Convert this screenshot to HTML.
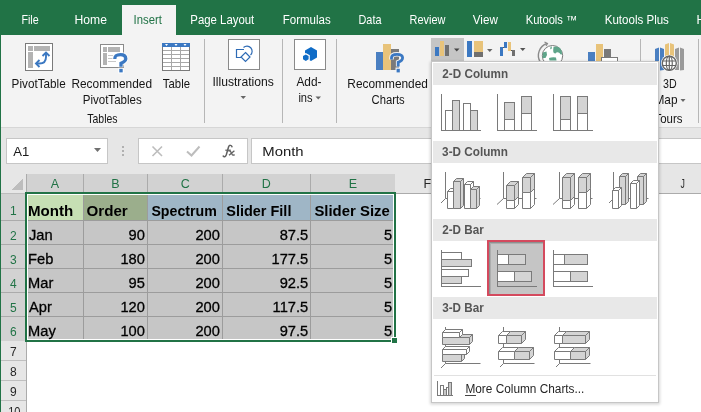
<!DOCTYPE html>
<html><head><meta charset="utf-8"><style>
html,body{margin:0;padding:0;width:701px;height:412px;overflow:hidden;background:#fff}
svg{display:block;will-change:transform;font-family:"Liberation Sans",sans-serif}
</style></head><body>
<svg width="701" height="412" viewBox="0 0 701 412">
<g shape-rendering="crispEdges">
<rect x="0" y="0" width="701" height="35" fill="#217346"/>
<rect x="122" y="5" width="54" height="30" fill="#f3f3f3"/>
<rect x="0" y="35" width="701" height="92" fill="#f3f3f3"/>
<rect x="0" y="127" width="701" height="1" fill="#d6d6d6"/>
<rect x="0" y="128" width="701" height="46" fill="#e6e6e6"/>
<!-- separators -->
<rect x="204" y="39" width="1" height="84" fill="#b6b6b6"/>
<rect x="282" y="39" width="1" height="84" fill="#b6b6b6"/>
<rect x="336" y="39" width="1" height="84" fill="#b6b6b6"/>
<rect x="640" y="39" width="1" height="84" fill="#b6b6b6"/>
<rect x="698" y="39" width="1" height="84" fill="#b6b6b6"/>
<!-- name box -->
<rect x="6.5" y="138.5" width="101" height="25" fill="#fff" stroke="#c6c6c6"/>
<rect x="122" y="146" width="2" height="2" fill="#b0b0b0"/>
<rect x="122" y="150" width="2" height="2" fill="#b0b0b0"/>
<rect x="122" y="154" width="2" height="2" fill="#b0b0b0"/>
<rect x="138.5" y="138.5" width="109" height="25" fill="#fff" stroke="#c6c6c6"/>
<rect x="251.5" y="138.5" width="460" height="25" fill="#fff" stroke="#c6c6c6"/>
</g>
<path d="M94 148 L101 148 L97.5 152 Z" fill="#707070"/>
<path d="M152.5 146.5 L162 156 M162 146.5 L152.5 156" stroke="#bdbdbd" stroke-width="1.6" fill="none"/>
<path d="M187 151.5 L191.5 155.5 L199.5 146.5" stroke="#bdbdbd" stroke-width="2" fill="none"/>
<path d="M232 146.8 C 231.5 145 229.3 144.8 228.6 146.8 L 226.3 154.8 C 225.6 157 224 157.2 223.2 156" stroke="#606060" stroke-width="1.5" fill="none" stroke-linecap="round"/>
<path d="M225.3 150.2 L230.8 150.2" stroke="#606060" stroke-width="1.2"/>
<path d="M228.4 151.2 C 229.8 150.6 230.6 151 231.2 152.6 L 232 154.2 C 232.6 155.4 233.6 155.3 234.6 154.6" stroke="#606060" stroke-width="1.3" fill="none"/>
<path d="M234.4 150.8 L 229 155.3" stroke="#606060" stroke-width="1.3" fill="none"/>

<!-- grid -->
<g shape-rendering="crispEdges">
<rect x="0" y="174" width="701" height="238" fill="#ffffff"/>
<!-- corner -->
<rect x="0" y="174" width="26" height="19" fill="#e6e6e6"/>
<!-- col headers selected -->
<rect x="26" y="174" width="369" height="18" fill="#d2d2d2"/>
<rect x="395" y="174" width="306" height="19" fill="#e6e6e6"/>
<rect x="395" y="193" width="306" height="1" fill="#ababab"/>
<rect x="83" y="174" width="1" height="18" fill="#ababab"/>
<rect x="147" y="174" width="1" height="18" fill="#ababab"/>
<rect x="222" y="174" width="1" height="18" fill="#ababab"/>
<rect x="310" y="174" width="1" height="18" fill="#ababab"/>
<rect x="26" y="174" width="1" height="18" fill="#ababab"/>
<!-- row headers -->
<rect x="0" y="193" width="26" height="148" fill="#d2d2d2"/>
<rect x="0" y="341" width="26" height="71" fill="#e6e6e6"/>
<rect x="26" y="341" width="1" height="71" fill="#ababab"/>
<rect x="0" y="220" width="26" height="1" fill="#ababab"/>
<rect x="0" y="244" width="26" height="1" fill="#ababab"/>
<rect x="0" y="268" width="26" height="1" fill="#ababab"/>
<rect x="0" y="292" width="26" height="1" fill="#ababab"/>
<rect x="0" y="316" width="26" height="1" fill="#ababab"/>
<rect x="0" y="360" width="26" height="1" fill="#bfbfbf"/>
<rect x="0" y="380" width="26" height="1" fill="#bfbfbf"/>
<rect x="0" y="400" width="26" height="1" fill="#bfbfbf"/>
<!-- cells -->
<rect x="27" y="194" width="367" height="146" fill="#ffffff"/>
<rect x="28" y="195" width="365" height="144" fill="#c6c6c6"/>
<rect x="28" y="195" width="55" height="25" fill="#c6dfb4"/>
<rect x="84" y="195" width="63" height="25" fill="#9bae8c"/>
<rect x="148" y="195" width="245" height="25" fill="#9fb6c6"/>
<rect x="83" y="195" width="1" height="144" fill="#9c9c9c"/>
<rect x="147" y="195" width="1" height="144" fill="#9c9c9c"/>
<rect x="222" y="195" width="1" height="144" fill="#9c9c9c"/>
<rect x="310" y="195" width="1" height="144" fill="#9c9c9c"/>
<rect x="28" y="220" width="365" height="1" fill="#9c9c9c"/>
<rect x="28" y="244" width="365" height="1" fill="#9c9c9c"/>
<rect x="28" y="268" width="365" height="1" fill="#9c9c9c"/>
<rect x="28" y="292" width="365" height="1" fill="#9c9c9c"/>
<rect x="28" y="316" width="365" height="1" fill="#9c9c9c"/>
<!-- selection border -->
<rect x="25" y="192" width="371" height="2" fill="#217346"/>
<rect x="25" y="340" width="366" height="2" fill="#217346"/>
<rect x="25" y="192" width="2" height="150" fill="#217346"/>
<rect x="394" y="192" width="2" height="145" fill="#217346"/>
<rect x="391" y="337" width="7" height="7" fill="#ffffff"/>
<rect x="392" y="338" width="5" height="5" fill="#217346"/>
<!-- corner triangle -->
<path d="M11.5 189.7 L23 178.4 L23 189.7 Z" fill="#bdbdbd"/>
<rect x="1" y="193" width="24" height="1" fill="#bdbdbd"/>
<!-- left green edge -->
<rect x="0" y="35" width="1" height="377" fill="#217346"/>
</g>

<!-- ribbon icons -->
<!-- PivotTable -->
<g shape-rendering="crispEdges">
<rect x="25.5" y="43.5" width="27" height="27" fill="#fff" stroke="#7a7a7a"/>
<rect x="28" y="46" width="5" height="5" fill="#b3b3b3"/>
<rect x="34" y="46" width="16" height="5" fill="#b3b3b3"/>
<rect x="28" y="52" width="5" height="16" fill="#b3b3b3"/>
</g>
<path d="M36.5 63.5 L39.5 63.5 C 43.5 63.5 46 61 46 57 L46 53" stroke="#3b78c2" stroke-width="1.9" fill="none"/>
<path d="M39.5 60 L36 63.5 L39.5 67" stroke="#3b78c2" stroke-width="1.9" fill="none"/>
<path d="M42.5 56 L46 52.5 L49.5 56" stroke="#3b78c2" stroke-width="1.9" fill="none"/>
<!-- Recommended PivotTables -->
<g shape-rendering="crispEdges">
<rect x="100.5" y="44.5" width="23" height="23" fill="#fff" stroke="#8a8a8a"/>
<rect x="103" y="47" width="4" height="5" fill="#b3b3b3"/>
<rect x="108" y="47" width="12" height="5" fill="#b3b3b3"/>
<rect x="103" y="53" width="4" height="12" fill="#b3b3b3"/>
<rect x="108" y="55" width="6" height="1" fill="#c8c8c8"/>
<rect x="108" y="58" width="6" height="1" fill="#c8c8c8"/>
<rect x="108" y="61" width="8" height="1" fill="#c8c8c8"/>
</g>
<path d="M114.8 59 C 114.8 55.3 116.8 54.6 120.5 54.6 C 124 54.6 125.8 56.5 125.8 58.8 C 125.8 61.3 123.5 62.3 121 63.3 L 121 66.8" stroke="#ffffff" stroke-width="5" fill="none"/>
<rect x="118.3" y="67.8" width="5.4" height="5.6" fill="#fff"/>
<path d="M114.8 59 C 114.8 55.3 116.8 54.6 120.5 54.6 C 124 54.6 125.8 56.5 125.8 58.8 C 125.8 61.3 123.5 62.3 121 63.3 L 121 66.8" stroke="#3b78c2" stroke-width="3.3" fill="none"/>
<rect x="119.3" y="68.8" width="3.4" height="3.6" fill="#3b78c2"/>
<!-- Table -->
<g shape-rendering="crispEdges">
<rect x="162" y="43" width="28" height="28" fill="#7a7a7a"/>
<rect x="163" y="47" width="26" height="23" fill="#a8a8a8"/>
<rect x="162" y="43" width="28" height="4" fill="#3b78c2"/>
</g>
<g fill="#fff" shape-rendering="crispEdges">
<rect x="163" y="47" width="8" height="3"/><rect x="172" y="47" width="8" height="3"/><rect x="181" y="47" width="8" height="3"/>
<rect x="163" y="51" width="8" height="3"/><rect x="172" y="51" width="8" height="3"/><rect x="181" y="51" width="8" height="3"/>
<rect x="163" y="55" width="8" height="3"/><rect x="172" y="55" width="8" height="3"/><rect x="181" y="55" width="8" height="3"/>
<rect x="163" y="59" width="8" height="3"/><rect x="172" y="59" width="8" height="3"/><rect x="181" y="59" width="8" height="3"/>
<rect x="163" y="63" width="8" height="3"/><rect x="172" y="63" width="8" height="3"/><rect x="181" y="63" width="8" height="3"/>
<rect x="163" y="67" width="8" height="3"/><rect x="172" y="67" width="8" height="3"/><rect x="181" y="67" width="8" height="3"/>
</g>
<path d="M165 44 L168 44 L166.5 46 Z M174.5 44 L177.5 44 L176 46 Z M183.5 44 L186.5 44 L185 46 Z" fill="#fff"/>
<!-- Illustrations -->
<rect x="228.5" y="39.5" width="31" height="30" fill="#fff" stroke="#8a8a8a" shape-rendering="crispEdges"/>
<path d="M244 49.5 L236.5 49.5 L236.5 57.5 L241 57.5" stroke="#2e6bb5" stroke-width="1.2" fill="none"/>
<path d="M245.5 52.5 L250 57 L245.5 61.5 L241 57 Z" stroke="#2e6bb5" stroke-width="1.2" fill="none"/>
<path d="M243.5 47.5 A 5 5 0 1 1 250.5 55" stroke="#2e6bb5" stroke-width="1.2" fill="none"/>
<!-- Add-ins -->
<rect x="294.5" y="39.5" width="31" height="30" fill="#fff" stroke="#8a8a8a" shape-rendering="crispEdges"/>
<path d="M311 47 L317 50.5 L317 57.5 L311 61 L305 57.5 L305 50.5 Z" fill="#0f6cc7"/>
<path d="M305.8 53 L309.8 55.3 L309.8 59.9 L305.8 62.2 L301.8 59.9 L301.8 55.3 Z" fill="#fff"/>
<path d="M305.8 54.5 L308.6 56.1 L308.6 59.3 L305.8 60.9 L303 59.3 L303 56.1 Z" fill="#0f6cc7"/>
<!-- Recommended Charts -->
<g shape-rendering="crispEdges">
<rect x="376" y="52" width="7" height="18" fill="#4a7fc1"/>
<rect x="383" y="44" width="8" height="26" fill="#e8c37a"/>
<rect x="391" y="49" width="8" height="21" fill="#7a7a7a"/>
</g>
<path d="M391.5 59.5 L391.5 57.8 Q 391.5 54.3 397 54.3 Q 402.6 54.3 402.6 57.8 Q 402.6 60.8 398.2 62.3 L 398.2 66.5" stroke="#f3f3f3" stroke-width="4.6" fill="none"/>
<rect x="395.5" y="67.5" width="5" height="6" fill="#f3f3f3"/>
<path d="M391.5 59.5 L391.5 57.8 Q 391.5 54.3 397 54.3 Q 402.6 54.3 402.6 57.8 Q 402.6 60.8 398.2 62.3 L 398.2 66.5" stroke="#3b78c2" stroke-width="2.8" fill="none"/>
<rect x="396.6" y="68.8" width="3.2" height="3.6" fill="#3b78c2"/>
<!-- column chart button highlight -->
<rect x="431" y="38" width="33" height="23" fill="#c5c5c5" shape-rendering="crispEdges"/>
<g shape-rendering="crispEdges">
<rect x="435" y="47" width="4" height="9" fill="#3b78c2"/>
<rect x="440" y="41" width="4" height="15" fill="#e8c37a"/>
<rect x="445" y="45" width="4" height="11" fill="#707070"/>
<rect x="467" y="41" width="5" height="16" fill="#3b78c2"/>
<rect x="474" y="41" width="9" height="11" fill="#e8c37a"/>
<rect x="474" y="52" width="9" height="5" fill="#707070"/>
<rect x="500" y="47" width="3" height="9" fill="#3b78c2"/>
<rect x="504" y="42" width="3" height="6" fill="#3b78c2"/>
<rect x="503" y="47" width="1" height="1" fill="#555"/>
<rect x="508" y="42" width="3" height="9" fill="#e8c37a"/>
<rect x="512" y="50" width="3" height="6" fill="#707070"/>
<rect x="511" y="50" width="1" height="1" fill="#555"/>
</g>
<path d="M454 48.5 L459.5 48.5 L456.75 51.5 Z" fill="#444"/>
<path d="M487 49 L492.5 49 L489.75 52 Z" fill="#666"/>
<path d="M520 48 L525.5 48 L522.75 51 Z" fill="#555"/>
<!-- globe -->
<path d="M547 43.5 A 12.5 12.5 0 0 0 540.3 62" stroke="#8a8a8a" stroke-width="1.4" fill="none"/>
<path d="M544.5 42 L547.5 43.5 L546 46" stroke="#8a8a8a" stroke-width="1.2" fill="none"/>
<circle cx="552.5" cy="55.7" r="10.2" fill="#fff" stroke="#7a7a7a" stroke-width="1"/>
<path d="M553.5 47 Q 557 45.5 560 48 Q 562.5 51 562 54 Q 561 55.5 559.5 53 Q 557 51.5 555.5 53.5 Q 553 53.5 553.2 50 Z" fill="#5fa58a"/>
<path d="M542.8 52.5 L546.5 51.5 L547 55 L545.5 58 L542.5 58 Z" fill="#5fa58a"/>
<path d="M549 58 Q 552 57 556 57.5 L556.5 60.5 L549.5 60.5 Z" fill="#5fa58a"/>
<path d="M550.5 47 L552 46.5 L551.5 49 L550.2 49.2 Z" fill="#5fa58a"/>
<!-- pivot chart -->
<g shape-rendering="crispEdges">
<rect x="588" y="52" width="7" height="12" fill="#4a7fc1"/>
<rect x="596" y="44" width="7" height="20" fill="#e8c37a"/>
<rect x="604" y="49" width="7" height="8" fill="#7a7a7a"/>
<rect x="601.5" y="57.5" width="16" height="8" fill="#fff" stroke="#7a7a7a"/>
</g>
<!-- 3D map -->
<path d="M655 49 L659 47.5 L659 70 L655 70 Z" fill="#4a7fc1"/>
<path d="M660 47.5 L664 49 L664 70 L660 70.5 Z" fill="#4a7fc1"/>
<path d="M665 44.5 L669 43 L669 62 L665 62 Z" fill="#e8c37a"/>
<path d="M670 43 L674 44.5 L674 62 L670 62 Z" fill="#e8c37a"/>
<path d="M675 49 L679 47.5 L679 70 L675 70 Z" fill="#9a9a9a"/>
<path d="M680 47.5 L684 49 L684 70 L680 70.5 Z" fill="#9a9a9a"/>
<circle cx="669.3" cy="63.2" r="8.3" fill="#fff"/>
<circle cx="669.3" cy="63.2" r="7" fill="none" stroke="#666" stroke-width="1.4"/>
<path d="M662.5 61 L676 61 M662.5 65.5 L676 65.5 M669.3 56.2 L669.3 70.2" stroke="#666" stroke-width="1.2"/>
<ellipse cx="669.3" cy="63.2" rx="3" ry="7" fill="none" stroke="#666" stroke-width="1.2"/>
<path d="M680.5 99 L685.5 99 L683 102 Z" fill="#666"/>
<!-- ribbon dropdown arrows -->
<path d="M240.5 96 L246 96 L243.25 99 Z" fill="#666"/>
<path d="M315.5 96.5 L321 96.5 L318.25 99.5 Z" fill="#666"/>

<g>
<text transform="translate(21.40,23.70) scale(0.8951,1)" font-size="12" font-weight="normal" fill="#ffffff">File</text>
<text transform="translate(74.50,23.70) scale(1.0144,1)" font-size="12" font-weight="normal" fill="#ffffff">Home</text>
<text transform="translate(133.56,23.70) scale(0.9435,1)" font-size="12" font-weight="normal" fill="#217346">Insert</text>
<text transform="translate(190.30,23.70) scale(0.9507,1)" font-size="12" font-weight="normal" fill="#ffffff">Page Layout</text>
<text transform="translate(282.70,23.70) scale(0.9598,1)" font-size="12" font-weight="normal" fill="#ffffff">Formulas</text>
<text transform="translate(358.50,23.70) scale(0.9075,1)" font-size="12" font-weight="normal" fill="#ffffff">Data</text>
<text transform="translate(409.60,23.70) scale(0.9123,1)" font-size="12" font-weight="normal" fill="#ffffff">Review</text>
<text transform="translate(472.80,23.70) scale(0.9722,1)" font-size="12" font-weight="normal" fill="#ffffff">View</text>
<text transform="translate(525.70,23.70) scale(0.9308,1)" font-size="12" font-weight="normal" fill="#ffffff">Kutools ™</text>
<text transform="translate(604.70,23.70) scale(0.9640,1)" font-size="12" font-weight="normal" fill="#ffffff">Kutools Plus</text>
<text transform="translate(696.40,23.70) scale(1.0000,1)" font-size="12" font-weight="normal" fill="#ffffff">H</text>
<text transform="translate(11.60,88.00) scale(0.9768,1)" font-size="12" font-weight="normal" fill="#151515">PivotTable</text>
<text transform="translate(71.40,88.00) scale(0.9926,1)" font-size="12" font-weight="normal" fill="#151515">Recommended</text>
<text transform="translate(82.70,103.80) scale(0.9631,1)" font-size="12" font-weight="normal" fill="#151515">PivotTables</text>
<text transform="translate(87.30,122.60) scale(0.8735,1)" font-size="12" font-weight="normal" fill="#151515">Tables</text>
<text transform="translate(162.80,88.00) scale(0.9478,1)" font-size="12" font-weight="normal" fill="#151515">Table</text>
<text transform="translate(212.39,86.10) scale(1.0119,1)" font-size="12" font-weight="normal" fill="#151515">Illustrations</text>
<text transform="translate(296.40,86.10) scale(0.9901,1)" font-size="12" font-weight="normal" fill="#151515">Add-</text>
<text transform="translate(298.40,101.50) scale(0.9257,1)" font-size="12" font-weight="normal" fill="#151515">ins</text>
<text transform="translate(347.30,87.80) scale(0.9926,1)" font-size="12" font-weight="normal" fill="#151515">Recommended</text>
<text transform="translate(371.50,103.70) scale(0.9393,1)" font-size="12" font-weight="normal" fill="#151515">Charts</text>
<text transform="translate(663.00,88.00) scale(0.8868,1)" font-size="12" font-weight="normal" fill="#151515">3D</text>
<text transform="translate(654.50,104.00) scale(0.9886,1)" font-size="12" font-weight="normal" fill="#151515">Map</text>
<text transform="translate(654.50,122.80) scale(0.9542,1)" font-size="12" font-weight="normal" fill="#151515">Tours</text>
<text transform="translate(13.20,156.00) scale(1.0082,1)" font-size="13" font-weight="normal" fill="#1a1a1a">A1</text>
<text transform="translate(262.25,156.00) scale(1.1461,1)" font-size="13" font-weight="normal" fill="#1a1a1a">Month</text>
<text transform="translate(50.80,188.00) scale(1.0000,1)" font-size="12.5" font-weight="normal" fill="#217346">A</text>
<text transform="translate(111.30,188.00) scale(1.0000,1)" font-size="12.5" font-weight="normal" fill="#217346">B</text>
<text transform="translate(180.80,188.00) scale(1.0000,1)" font-size="12.5" font-weight="normal" fill="#217346">C</text>
<text transform="translate(261.80,188.00) scale(1.0000,1)" font-size="12.5" font-weight="normal" fill="#217346">D</text>
<text transform="translate(348.80,188.00) scale(1.0000,1)" font-size="12.5" font-weight="normal" fill="#217346">E</text>
<text transform="translate(423.50,188.00) scale(1.0000,1)" font-size="12.5" font-weight="normal" fill="#262626">F</text>
<text transform="translate(680.50,187.80) scale(0.7000,1)" font-size="12.5" font-weight="normal" fill="#262626">J</text>
<text transform="translate(10.00,215.00) scale(1.0000,1)" font-size="12" font-weight="normal" fill="#217346">1</text>
<text transform="translate(10.00,240.00) scale(1.0000,1)" font-size="12" font-weight="normal" fill="#217346">2</text>
<text transform="translate(10.00,264.00) scale(1.0000,1)" font-size="12" font-weight="normal" fill="#217346">3</text>
<text transform="translate(10.00,288.00) scale(1.0000,1)" font-size="12" font-weight="normal" fill="#217346">4</text>
<text transform="translate(10.00,312.00) scale(1.0000,1)" font-size="12" font-weight="normal" fill="#217346">5</text>
<text transform="translate(10.00,336.00) scale(1.0000,1)" font-size="12" font-weight="normal" fill="#217346">6</text>
<text transform="translate(10.00,356.00) scale(1.0000,1)" font-size="12" font-weight="normal" fill="#262626">7</text>
<text transform="translate(10.00,376.00) scale(1.0000,1)" font-size="12" font-weight="normal" fill="#262626">8</text>
<text transform="translate(10.00,396.00) scale(1.0000,1)" font-size="12" font-weight="normal" fill="#262626">9</text>
<text transform="translate(8.20,416.00) scale(0.9215,1)" font-size="12" font-weight="normal" fill="#262626">10</text>
<text transform="translate(28.01,215.80) scale(0.9941,1)" font-size="15.2" font-weight="bold" fill="#000000">Month</text>
<text transform="translate(86.50,215.80) scale(0.9964,1)" font-size="15.2" font-weight="bold" fill="#000000">Order</text>
<text transform="translate(151.40,215.80) scale(0.9332,1)" font-size="15.2" font-weight="bold" fill="#000000">Spectrum</text>
<text transform="translate(226.30,215.80) scale(0.9525,1)" font-size="15.2" font-weight="bold" fill="#000000">Slider Fill</text>
<text transform="translate(314.40,215.80) scale(0.9808,1)" font-size="15.2" font-weight="bold" fill="#000000">Slider Size</text>
<text transform="translate(29.00,239.90) scale(0.9710,1)" font-size="15.1" font-weight="normal" fill="#000000" stroke="#000000" stroke-width="0.3">Jan</text>
<text transform="translate(128.58,239.90) scale(0.9710,1)" font-size="15.1" font-weight="normal" fill="#000000" stroke="#000000" stroke-width="0.3">90</text>
<text transform="translate(195.43,239.90) scale(0.9710,1)" font-size="15.1" font-weight="normal" fill="#000000" stroke="#000000" stroke-width="0.3">200</text>
<text transform="translate(279.66,239.90) scale(0.9710,1)" font-size="15.1" font-weight="normal" fill="#000000" stroke="#000000" stroke-width="0.3">87.5</text>
<text transform="translate(383.93,239.90) scale(0.9710,1)" font-size="15.1" font-weight="normal" fill="#000000" stroke="#000000" stroke-width="0.3">5</text>
<text transform="translate(28.03,263.90) scale(0.9710,1)" font-size="15.1" font-weight="normal" fill="#000000" stroke="#000000" stroke-width="0.3">Feb</text>
<text transform="translate(120.43,263.90) scale(0.9710,1)" font-size="15.1" font-weight="normal" fill="#000000" stroke="#000000" stroke-width="0.3">180</text>
<text transform="translate(195.43,263.90) scale(0.9710,1)" font-size="15.1" font-weight="normal" fill="#000000" stroke="#000000" stroke-width="0.3">200</text>
<text transform="translate(271.51,263.90) scale(0.9710,1)" font-size="15.1" font-weight="normal" fill="#000000" stroke="#000000" stroke-width="0.3">177.5</text>
<text transform="translate(383.93,263.90) scale(0.9710,1)" font-size="15.1" font-weight="normal" fill="#000000" stroke="#000000" stroke-width="0.3">5</text>
<text transform="translate(28.03,287.90) scale(0.9710,1)" font-size="15.1" font-weight="normal" fill="#000000" stroke="#000000" stroke-width="0.3">Mar</text>
<text transform="translate(128.58,287.90) scale(0.9710,1)" font-size="15.1" font-weight="normal" fill="#000000" stroke="#000000" stroke-width="0.3">95</text>
<text transform="translate(195.43,287.90) scale(0.9710,1)" font-size="15.1" font-weight="normal" fill="#000000" stroke="#000000" stroke-width="0.3">200</text>
<text transform="translate(279.66,287.90) scale(0.9710,1)" font-size="15.1" font-weight="normal" fill="#000000" stroke="#000000" stroke-width="0.3">92.5</text>
<text transform="translate(383.93,287.90) scale(0.9710,1)" font-size="15.1" font-weight="normal" fill="#000000" stroke="#000000" stroke-width="0.3">5</text>
<text transform="translate(29.00,311.90) scale(0.9710,1)" font-size="15.1" font-weight="normal" fill="#000000" stroke="#000000" stroke-width="0.3">Apr</text>
<text transform="translate(120.43,311.90) scale(0.9710,1)" font-size="15.1" font-weight="normal" fill="#000000" stroke="#000000" stroke-width="0.3">120</text>
<text transform="translate(195.43,311.90) scale(0.9710,1)" font-size="15.1" font-weight="normal" fill="#000000" stroke="#000000" stroke-width="0.3">200</text>
<text transform="translate(272.60,311.90) scale(0.9710,1)" font-size="15.1" font-weight="normal" fill="#000000" stroke="#000000" stroke-width="0.3">117.5</text>
<text transform="translate(383.93,311.90) scale(0.9710,1)" font-size="15.1" font-weight="normal" fill="#000000" stroke="#000000" stroke-width="0.3">5</text>
<text transform="translate(28.03,335.90) scale(0.9710,1)" font-size="15.1" font-weight="normal" fill="#000000" stroke="#000000" stroke-width="0.3">May</text>
<text transform="translate(120.43,335.90) scale(0.9710,1)" font-size="15.1" font-weight="normal" fill="#000000" stroke="#000000" stroke-width="0.3">100</text>
<text transform="translate(195.43,335.90) scale(0.9710,1)" font-size="15.1" font-weight="normal" fill="#000000" stroke="#000000" stroke-width="0.3">200</text>
<text transform="translate(279.66,335.90) scale(0.9710,1)" font-size="15.1" font-weight="normal" fill="#000000" stroke="#000000" stroke-width="0.3">97.5</text>
<text transform="translate(383.93,335.90) scale(0.9710,1)" font-size="15.1" font-weight="normal" fill="#000000" stroke="#000000" stroke-width="0.3">5</text>
</g>
<!-- panel shadow -->
<defs><filter id="sh" x="-10%" y="-10%" width="120%" height="120%"><feGaussianBlur stdDeviation="1.6"/></filter></defs>
<rect x="430" y="61.5" width="230" height="343" fill="#000" opacity="0.16" filter="url(#sh)"/>
<g shape-rendering="crispEdges">
<rect x="431" y="61" width="228" height="342" fill="#c6c6c6"/>
<rect x="432" y="62" width="226" height="340" fill="#ffffff"/>
<rect x="433" y="63" width="224" height="22" fill="#e8e8e8"/>
<rect x="433" y="141" width="224" height="22" fill="#e8e8e8"/>
<rect x="433" y="219" width="224" height="22" fill="#e8e8e8"/>
<rect x="433" y="297" width="224" height="22" fill="#e8e8e8"/>
<rect x="434" y="375" width="222" height="1" fill="#e1e1e1"/>
<rect x="487" y="240" width="58" height="56" fill="#d44a5e"/>
<rect x="489" y="242" width="54" height="52" fill="#c5c5c5"/>
<rect x="489" y="242" width="54" height="1" fill="#8d9190"/>
<rect x="489" y="242" width="1" height="52" fill="#8d9190"/>
<rect x="490" y="243" width="53" height="1" fill="#acadad"/>
<rect x="490" y="243" width="1" height="51" fill="#acadad"/>
</g>
<g stroke="#7a7a7a" stroke-width="1" fill="none" shape-rendering="crispEdges">
<path d="M441.5 94 L441.5 130.5 L481 130.5"/>
<rect x="445.5" y="110.5" width="7" height="20" fill="#ffffff"/>
<rect x="452.5" y="100.5" width="7" height="30" fill="#d4d4d4"/>
<rect x="463.5" y="103.5" width="7" height="27" fill="#ffffff"/>
<rect x="470.5" y="110.5" width="7" height="20" fill="#d4d4d4"/>
<path d="M497.5 94 L497.5 130.5 L537 130.5"/>
<rect x="504.5" y="102.5" width="10" height="17" fill="#d4d4d4"/>
<rect x="504.5" y="119.5" width="10" height="11" fill="#ffffff"/>
<rect x="521.5" y="96.5" width="10" height="17" fill="#d4d4d4"/>
<rect x="521.5" y="113.5" width="10" height="17" fill="#ffffff"/>
<path d="M553.5 94 L553.5 130.5 L593 130.5"/>
<rect x="560.5" y="96.5" width="10" height="23" fill="#d4d4d4"/>
<rect x="560.5" y="119.5" width="10" height="11" fill="#ffffff"/>
<rect x="577.5" y="96.5" width="10" height="17" fill="#d4d4d4"/>
<rect x="577.5" y="113.5" width="10" height="17" fill="#ffffff"/>
<path d="M441.5 250 L441.5 286.5 L481 286.5"/>
<rect x="441.5" y="252.5" width="20" height="7" fill="#ffffff"/>
<rect x="441.5" y="259.5" width="30" height="7" fill="#d4d4d4"/>
<rect x="441.5" y="269.5" width="27" height="7" fill="#ffffff"/>
<rect x="441.5" y="276.5" width="20" height="7" fill="#d4d4d4"/>
<path d="M497.5 250 L497.5 286.5 L537 286.5"/>
<rect x="497.5" y="254.5" width="11" height="10" fill="#ffffff"/>
<rect x="508.5" y="254.5" width="17" height="10" fill="#d4d4d4"/>
<rect x="497.5" y="271.5" width="17" height="10" fill="#ffffff"/>
<rect x="514.5" y="271.5" width="17" height="10" fill="#d4d4d4"/>
<path d="M553.5 250 L553.5 286.5 L593 286.5"/>
<rect x="553.5" y="254.5" width="11" height="10" fill="#ffffff"/>
<rect x="564.5" y="254.5" width="23" height="10" fill="#d4d4d4"/>
<rect x="553.5" y="271.5" width="17" height="10" fill="#ffffff"/>
<rect x="570.5" y="271.5" width="17" height="10" fill="#d4d4d4"/>
</g>
<g shape-rendering="geometricPrecision">
<path d="M445.5 172 L445.5 198.5 L480.5 198.5 M445.5 198.5 L441 203" fill="none" stroke="#7a7a7a" stroke-width="1" stroke-linejoin="miter" />
<path d="M447.5 191.5 L450.5 188.5 L456.5 188.5 L453.5 191.5 Z" fill="#ffffff" stroke="#7a7a7a" stroke-width="1" stroke-linejoin="miter" />
<path d="M453.5 191.5 L456.5 188.5 L456.5 205.5 L453.5 208.5 Z" fill="#ffffff" stroke="#7a7a7a" stroke-width="1" stroke-linejoin="miter" />
<path d="M447.5 191.5 L453.5 191.5 L453.5 208.5 L447.5 208.5 Z" fill="#ffffff" stroke="#7a7a7a" stroke-width="1" stroke-linejoin="miter" />
<path d="M453.5 181.5 L456.5 178.5 L463.5 178.5 L460.5 181.5 Z" fill="#d4d4d4" stroke="#7a7a7a" stroke-width="1" stroke-linejoin="miter" />
<path d="M460.5 181.5 L463.5 178.5 L463.5 205.5 L460.5 208.5 Z" fill="#d4d4d4" stroke="#7a7a7a" stroke-width="1" stroke-linejoin="miter" />
<path d="M453.5 181.5 L460.5 181.5 L460.5 208.5 L453.5 208.5 Z" fill="#d4d4d4" stroke="#7a7a7a" stroke-width="1" stroke-linejoin="miter" />
<path d="M464.5 184.5 L467.5 181.5 L473.5 181.5 L470.5 184.5 Z" fill="#ffffff" stroke="#7a7a7a" stroke-width="1" stroke-linejoin="miter" />
<path d="M470.5 184.5 L473.5 181.5 L473.5 205.5 L470.5 208.5 Z" fill="#ffffff" stroke="#7a7a7a" stroke-width="1" stroke-linejoin="miter" />
<path d="M464.5 184.5 L470.5 184.5 L470.5 208.5 L464.5 208.5 Z" fill="#ffffff" stroke="#7a7a7a" stroke-width="1" stroke-linejoin="miter" />
<path d="M470.5 189.5 L473.5 186.5 L479.5 186.5 L476.5 189.5 Z" fill="#d4d4d4" stroke="#7a7a7a" stroke-width="1" stroke-linejoin="miter" />
<path d="M476.5 189.5 L479.5 186.5 L479.5 205.5 L476.5 208.5 Z" fill="#d4d4d4" stroke="#7a7a7a" stroke-width="1" stroke-linejoin="miter" />
<path d="M470.5 189.5 L476.5 189.5 L476.5 208.5 L470.5 208.5 Z" fill="#d4d4d4" stroke="#7a7a7a" stroke-width="1" stroke-linejoin="miter" />
<path d="M503.5 172 L503.5 198.5 L536.5 198.5 M503.5 198.5 L497 204.5" fill="none" stroke="#7a7a7a" stroke-width="1" stroke-linejoin="miter" />
<path d="M506.5 185.5 L510.5 181.5 L518.5 181.5 L514.5 185.5 Z" fill="#d4d4d4" stroke="#7a7a7a" stroke-width="1" stroke-linejoin="miter" />
<path d="M514.5 185.5 L518.5 181.5 L518.5 196.5 L514.5 200.5 Z" fill="#d4d4d4" stroke="#7a7a7a" stroke-width="1" stroke-linejoin="miter" />
<path d="M514.5 200.5 L518.5 196.5 L518.5 204.5 L514.5 208.5 Z" fill="#ffffff" stroke="#7a7a7a" stroke-width="1" stroke-linejoin="miter" />
<path d="M506.5 185.5 L514.5 185.5 L514.5 200.5 L506.5 200.5 Z" fill="#d4d4d4" stroke="#7a7a7a" stroke-width="1" stroke-linejoin="miter" />
<path d="M506.5 200.5 L514.5 200.5 L514.5 208.5 L506.5 208.5 Z" fill="#ffffff" stroke="#7a7a7a" stroke-width="1" stroke-linejoin="miter" />
<path d="M522.5 177.5 L526.5 173.5 L534.5 173.5 L530.5 177.5 Z" fill="#d4d4d4" stroke="#7a7a7a" stroke-width="1" stroke-linejoin="miter" />
<path d="M530.5 177.5 L534.5 173.5 L534.5 188.5 L530.5 192.5 Z" fill="#d4d4d4" stroke="#7a7a7a" stroke-width="1" stroke-linejoin="miter" />
<path d="M530.5 192.5 L534.5 188.5 L534.5 204.5 L530.5 208.5 Z" fill="#ffffff" stroke="#7a7a7a" stroke-width="1" stroke-linejoin="miter" />
<path d="M522.5 177.5 L530.5 177.5 L530.5 192.5 L522.5 192.5 Z" fill="#d4d4d4" stroke="#7a7a7a" stroke-width="1" stroke-linejoin="miter" />
<path d="M522.5 192.5 L530.5 192.5 L530.5 208.5 L522.5 208.5 Z" fill="#ffffff" stroke="#7a7a7a" stroke-width="1" stroke-linejoin="miter" />
<path d="M559.5 172 L559.5 198.5 L592.5 198.5 M559.5 198.5 L553 204.5" fill="none" stroke="#7a7a7a" stroke-width="1" stroke-linejoin="miter" />
<path d="M562.5 177.5 L566.5 173.5 L574.5 173.5 L570.5 177.5 Z" fill="#d4d4d4" stroke="#7a7a7a" stroke-width="1" stroke-linejoin="miter" />
<path d="M570.5 177.5 L574.5 173.5 L574.5 196.5 L570.5 200.5 Z" fill="#d4d4d4" stroke="#7a7a7a" stroke-width="1" stroke-linejoin="miter" />
<path d="M570.5 200.5 L574.5 196.5 L574.5 204.5 L570.5 208.5 Z" fill="#ffffff" stroke="#7a7a7a" stroke-width="1" stroke-linejoin="miter" />
<path d="M562.5 177.5 L570.5 177.5 L570.5 200.5 L562.5 200.5 Z" fill="#d4d4d4" stroke="#7a7a7a" stroke-width="1" stroke-linejoin="miter" />
<path d="M562.5 200.5 L570.5 200.5 L570.5 208.5 L562.5 208.5 Z" fill="#ffffff" stroke="#7a7a7a" stroke-width="1" stroke-linejoin="miter" />
<path d="M578.5 177.5 L582.5 173.5 L590.5 173.5 L586.5 177.5 Z" fill="#d4d4d4" stroke="#7a7a7a" stroke-width="1" stroke-linejoin="miter" />
<path d="M586.5 177.5 L590.5 173.5 L590.5 188.5 L586.5 192.5 Z" fill="#d4d4d4" stroke="#7a7a7a" stroke-width="1" stroke-linejoin="miter" />
<path d="M586.5 192.5 L590.5 188.5 L590.5 204.5 L586.5 208.5 Z" fill="#ffffff" stroke="#7a7a7a" stroke-width="1" stroke-linejoin="miter" />
<path d="M578.5 177.5 L586.5 177.5 L586.5 192.5 L578.5 192.5 Z" fill="#d4d4d4" stroke="#7a7a7a" stroke-width="1" stroke-linejoin="miter" />
<path d="M578.5 192.5 L586.5 192.5 L586.5 208.5 L578.5 208.5 Z" fill="#ffffff" stroke="#7a7a7a" stroke-width="1" stroke-linejoin="miter" />
<path d="M613.5 172 L613.5 198.5 L648.5 198.5 M613.5 198.5 L609 203" fill="none" stroke="#7a7a7a" stroke-width="1" stroke-linejoin="miter" />
<path d="M619.5 176.5 L622.5 173.5 L628.5 173.5 L625.5 176.5 Z" fill="#d4d4d4" stroke="#7a7a7a" stroke-width="1" stroke-linejoin="miter" />
<path d="M625.5 176.5 L628.5 173.5 L628.5 201.5 L625.5 204.5 Z" fill="#d4d4d4" stroke="#7a7a7a" stroke-width="1" stroke-linejoin="miter" />
<path d="M619.5 176.5 L625.5 176.5 L625.5 204.5 L619.5 204.5 Z" fill="#d4d4d4" stroke="#7a7a7a" stroke-width="1" stroke-linejoin="miter" />
<path d="M637.5 176.5 L640.5 173.5 L646.5 173.5 L643.5 176.5 Z" fill="#d4d4d4" stroke="#7a7a7a" stroke-width="1" stroke-linejoin="miter" />
<path d="M643.5 176.5 L646.5 173.5 L646.5 201.5 L643.5 204.5 Z" fill="#d4d4d4" stroke="#7a7a7a" stroke-width="1" stroke-linejoin="miter" />
<path d="M637.5 176.5 L643.5 176.5 L643.5 204.5 L637.5 204.5 Z" fill="#d4d4d4" stroke="#7a7a7a" stroke-width="1" stroke-linejoin="miter" />
<path d="M612.5 190.5 L615.5 187.5 L621.5 187.5 L618.5 190.5 Z" fill="#ffffff" stroke="#7a7a7a" stroke-width="1" stroke-linejoin="miter" />
<path d="M618.5 190.5 L621.5 187.5 L621.5 205.5 L618.5 208.5 Z" fill="#ffffff" stroke="#7a7a7a" stroke-width="1" stroke-linejoin="miter" />
<path d="M612.5 190.5 L618.5 190.5 L618.5 208.5 L612.5 208.5 Z" fill="#ffffff" stroke="#7a7a7a" stroke-width="1" stroke-linejoin="miter" />
<path d="M630.5 183.5 L633.5 180.5 L639.5 180.5 L636.5 183.5 Z" fill="#ffffff" stroke="#7a7a7a" stroke-width="1" stroke-linejoin="miter" />
<path d="M636.5 183.5 L639.5 180.5 L639.5 205.5 L636.5 208.5 Z" fill="#ffffff" stroke="#7a7a7a" stroke-width="1" stroke-linejoin="miter" />
<path d="M630.5 183.5 L636.5 183.5 L636.5 208.5 L630.5 208.5 Z" fill="#ffffff" stroke="#7a7a7a" stroke-width="1" stroke-linejoin="miter" />
<path d="M445.5 327 L445.5 363.5 L480.5 363.5 M445.5 363.5 L441 368" fill="none" stroke="#7a7a7a" stroke-width="1" stroke-linejoin="miter" />
<path d="M442.5 337.5 L445.5 334.5 L472.5 334.5 L469.5 337.5 Z" fill="#d4d4d4" stroke="#7a7a7a" stroke-width="1" stroke-linejoin="miter" />
<path d="M469.5 337.5 L472.5 334.5 L472.5 341.5 L469.5 344.5 Z" fill="#d4d4d4" stroke="#7a7a7a" stroke-width="1" stroke-linejoin="miter" />
<path d="M442.5 337.5 L469.5 337.5 L469.5 344.5 L442.5 344.5 Z" fill="#d4d4d4" stroke="#7a7a7a" stroke-width="1" stroke-linejoin="miter" />
<path d="M442.5 332.5 L445.5 329.5 L462.5 329.5 L459.5 332.5 Z" fill="#ffffff" stroke="#7a7a7a" stroke-width="1" stroke-linejoin="miter" />
<path d="M459.5 332.5 L462.5 329.5 L462.5 334.5 L459.5 337.5 Z" fill="#ffffff" stroke="#7a7a7a" stroke-width="1" stroke-linejoin="miter" />
<path d="M442.5 332.5 L459.5 332.5 L459.5 337.5 L442.5 337.5 Z" fill="#ffffff" stroke="#7a7a7a" stroke-width="1" stroke-linejoin="miter" />
<path d="M442.5 354.5 L445.5 351.5 L464.5 351.5 L461.5 354.5 Z" fill="#d4d4d4" stroke="#7a7a7a" stroke-width="1" stroke-linejoin="miter" />
<path d="M461.5 354.5 L464.5 351.5 L464.5 358.5 L461.5 361.5 Z" fill="#d4d4d4" stroke="#7a7a7a" stroke-width="1" stroke-linejoin="miter" />
<path d="M442.5 354.5 L461.5 354.5 L461.5 361.5 L442.5 361.5 Z" fill="#d4d4d4" stroke="#7a7a7a" stroke-width="1" stroke-linejoin="miter" />
<path d="M442.5 349.5 L445.5 346.5 L469.5 346.5 L466.5 349.5 Z" fill="#ffffff" stroke="#7a7a7a" stroke-width="1" stroke-linejoin="miter" />
<path d="M466.5 349.5 L469.5 346.5 L469.5 351.5 L466.5 354.5 Z" fill="#ffffff" stroke="#7a7a7a" stroke-width="1" stroke-linejoin="miter" />
<path d="M442.5 349.5 L466.5 349.5 L466.5 354.5 L442.5 354.5 Z" fill="#ffffff" stroke="#7a7a7a" stroke-width="1" stroke-linejoin="miter" />
<path d="M503.5 327 L503.5 363.5 L534.5 363.5 M503.5 363.5 L500 367" fill="none" stroke="#7a7a7a" stroke-width="1" stroke-linejoin="miter" />
<path d="M498.5 335.5 L502.5 331.5 L510.5 331.5 L506.5 335.5 Z" fill="#ffffff" stroke="#7a7a7a" stroke-width="1" stroke-linejoin="miter" />
<path d="M506.5 335.5 L510.5 331.5 L525.5 331.5 L521.5 335.5 Z" fill="#d4d4d4" stroke="#7a7a7a" stroke-width="1" stroke-linejoin="miter" />
<path d="M521.5 335.5 L525.5 331.5 L525.5 339.5 L521.5 343.5 Z" fill="#d4d4d4" stroke="#7a7a7a" stroke-width="1" stroke-linejoin="miter" />
<path d="M498.5 335.5 L506.5 335.5 L506.5 343.5 L498.5 343.5 Z" fill="#ffffff" stroke="#7a7a7a" stroke-width="1" stroke-linejoin="miter" />
<path d="M506.5 335.5 L521.5 335.5 L521.5 343.5 L506.5 343.5 Z" fill="#d4d4d4" stroke="#7a7a7a" stroke-width="1" stroke-linejoin="miter" />
<path d="M498.5 351.5 L502.5 347.5 L518.5 347.5 L514.5 351.5 Z" fill="#ffffff" stroke="#7a7a7a" stroke-width="1" stroke-linejoin="miter" />
<path d="M514.5 351.5 L518.5 347.5 L533.5 347.5 L529.5 351.5 Z" fill="#d4d4d4" stroke="#7a7a7a" stroke-width="1" stroke-linejoin="miter" />
<path d="M529.5 351.5 L533.5 347.5 L533.5 355.5 L529.5 359.5 Z" fill="#d4d4d4" stroke="#7a7a7a" stroke-width="1" stroke-linejoin="miter" />
<path d="M498.5 351.5 L514.5 351.5 L514.5 359.5 L498.5 359.5 Z" fill="#ffffff" stroke="#7a7a7a" stroke-width="1" stroke-linejoin="miter" />
<path d="M514.5 351.5 L529.5 351.5 L529.5 359.5 L514.5 359.5 Z" fill="#d4d4d4" stroke="#7a7a7a" stroke-width="1" stroke-linejoin="miter" />
<path d="M559.5 327 L559.5 363.5 L590.5 363.5 M559.5 363.5 L556 367" fill="none" stroke="#7a7a7a" stroke-width="1" stroke-linejoin="miter" />
<path d="M554.5 335.5 L558.5 331.5 L566.5 331.5 L562.5 335.5 Z" fill="#ffffff" stroke="#7a7a7a" stroke-width="1" stroke-linejoin="miter" />
<path d="M562.5 335.5 L566.5 331.5 L589.5 331.5 L585.5 335.5 Z" fill="#d4d4d4" stroke="#7a7a7a" stroke-width="1" stroke-linejoin="miter" />
<path d="M585.5 335.5 L589.5 331.5 L589.5 339.5 L585.5 343.5 Z" fill="#d4d4d4" stroke="#7a7a7a" stroke-width="1" stroke-linejoin="miter" />
<path d="M554.5 335.5 L562.5 335.5 L562.5 343.5 L554.5 343.5 Z" fill="#ffffff" stroke="#7a7a7a" stroke-width="1" stroke-linejoin="miter" />
<path d="M562.5 335.5 L585.5 335.5 L585.5 343.5 L562.5 343.5 Z" fill="#d4d4d4" stroke="#7a7a7a" stroke-width="1" stroke-linejoin="miter" />
<path d="M554.5 351.5 L558.5 347.5 L574.5 347.5 L570.5 351.5 Z" fill="#ffffff" stroke="#7a7a7a" stroke-width="1" stroke-linejoin="miter" />
<path d="M570.5 351.5 L574.5 347.5 L589.5 347.5 L585.5 351.5 Z" fill="#d4d4d4" stroke="#7a7a7a" stroke-width="1" stroke-linejoin="miter" />
<path d="M585.5 351.5 L589.5 347.5 L589.5 355.5 L585.5 359.5 Z" fill="#d4d4d4" stroke="#7a7a7a" stroke-width="1" stroke-linejoin="miter" />
<path d="M554.5 351.5 L570.5 351.5 L570.5 359.5 L554.5 359.5 Z" fill="#ffffff" stroke="#7a7a7a" stroke-width="1" stroke-linejoin="miter" />
<path d="M570.5 351.5 L585.5 351.5 L585.5 359.5 L570.5 359.5 Z" fill="#d4d4d4" stroke="#7a7a7a" stroke-width="1" stroke-linejoin="miter" />
</g>
<g stroke="#7a7a7a" stroke-width="1" fill="none" shape-rendering="crispEdges">
<path d="M437.5 381 L437.5 395.5 L452.5 395.5"/>
<rect x="440.5" y="385.5" width="3" height="10" fill="#fff"/><rect x="443.5" y="389.5" width="3" height="6" fill="#c8c8c8"/><rect x="446.5" y="387.5" width="2" height="8" fill="#fff"/><rect x="448.5" y="382.5" width="3" height="13" fill="#c8c8c8"/>
</g>
<rect x="465" y="395" width="11" height="1" fill="#444"/>

<g>
<text transform="translate(442.30,78.30) scale(0.9776,1)" font-size="12" font-weight="bold" fill="#555555">2-D Column</text>
<text transform="translate(442.10,156.00) scale(0.9791,1)" font-size="12" font-weight="bold" fill="#555555">3-D Column</text>
<text transform="translate(442.20,233.90) scale(0.9742,1)" font-size="12" font-weight="bold" fill="#555555">2-D Bar</text>
<text transform="translate(442.20,312.00) scale(0.9742,1)" font-size="12" font-weight="bold" fill="#555555">3-D Bar</text>
<text transform="translate(465.40,393.20) scale(0.9870,1)" font-size="12" font-weight="normal" fill="#262626">More Column Charts...</text>
</g>
</svg>
</body></html>
